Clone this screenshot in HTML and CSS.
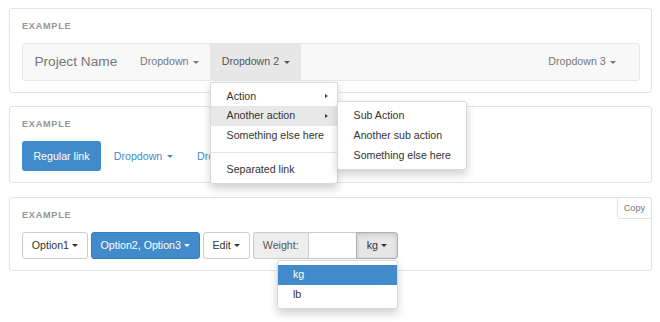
FILE: index.html
```html
<!DOCTYPE html>
<html>
<head>
<meta charset="utf-8">
<link rel="stylesheet" href="styles.css">
</head>
<body>
<div class="page">
  <section class="example ex-nav">
    <div class="ex-label">Example</div>
    <nav class="navbar">
      <a class="brand">Project Name</a>
      <ul class="nav">
        <li class="nav-item"><a>Dropdown <span class="caret"></span></a></li>
        <li class="nav-item open"><a>Dropdown 2 <span class="caret"></span></a>
          <ul class="menu menu-main">
            <li class="sub"><a>Action <span class="arrow"></span></a></li>
            <li class="sub"><a class="hl">Another action <span class="arrow"></span></a>
              <ul class="menu menu-sub">
                <li><a>Sub Action</a></li>
                <li><a>Another sub action</a></li>
                <li><a>Something else here</a></li>
              </ul>
            </li>
            <li><a>Something else here</a></li>
            <li class="divider"></li>
            <li><a>Separated link</a></li>
          </ul>
        </li>
      </ul>
      <ul class="nav nav-right">
        <li class="nav-item"><a>Dropdown 3 <span class="caret"></span></a></li>
      </ul>
    </nav>
  </section>

  <section class="example ex-pills">
    <div class="ex-label">Example</div>
    <ul class="pills">
      <li><a class="pill active">Regular link</a></li>
      <li><a class="pill">Dropdown <span class="caret"></span></a></li>
      <li><a class="pill">Dropdown <span class="caret"></span></a></li>
    </ul>
  </section>

  <section class="example ex-btns">
    <button class="copy">Copy</button>
    <div class="ex-label">Example</div>
    <div class="toolbar">
      <button class="btn">Option1 <span class="caret"></span></button>
      <button class="btn btn-primary">Option2, Option3 <span class="caret"></span></button>
      <button class="btn">Edit <span class="caret"></span></button>
      <div class="input-group">
        <span class="addon">Weight:</span>
        <span class="field"></span>
        <button class="btn btn-unit">kg <span class="caret"></span></button>
        <ul class="menu menu-unit">
          <li><a class="active">kg</a></li>
          <li><a>lb</a></li>
        </ul>
      </div>
    </div>
  </section>
</div>
</body>
</html>
```

FILE: styles.css
```css
* { box-sizing: border-box; }
html, body { margin: 0; padding: 0; background: #fff; }
body {
  font-family: "Liberation Sans", Arial, sans-serif;
  font-size: 10.64px;
  line-height: 15.2px;
  color: #333;
}
ul { list-style: none; margin: 0; padding: 0; }
a { text-decoration: none; cursor: pointer; }

.page {
  min-height: 322px;
  padding: 8px 8px 0 9px;
}

.example {
  position: relative;
  border: 1px solid #e3e3e3;
  border-radius: 3px;
  padding: 0 11px 11px 12px;
}
.ex-nav { margin-bottom: 13px; padding-bottom: 11px; }
.ex-pills { margin-bottom: 14px; }

.ex-label {
  padding-top: 11px;
  height: 23px;
  margin-bottom: 11px;
  font-size: 9.1px;
  line-height: 12px;
  font-weight: bold;
  letter-spacing: 0.76px;
  text-transform: uppercase;
  color: #959595;
}

.caret {
  display: inline-block;
  width: 0;
  height: 0;
  vertical-align: middle;
  border-top: 3px solid;
  border-left: 3px solid transparent;
  border-right: 3px solid transparent;
  margin-left: 1.5px;
  margin-top: -1px;
}

/* navbar */
.navbar {
  display: flex;
  height: 38px;
  background: #f8f8f8;
  border: 1px solid #e7e7e7;
  border-radius: 3px;
}
.brand {
  display: block;
  padding: 0 11.4px;
  font-size: 13.7px;
  line-height: 36px;
  color: #777;
}
.nav { display: flex; }
.nav-right { margin-left: auto; padding-right: 11.5px; }
.nav-item { position: relative; }
.nav-item > a {
  display: block;
  padding: 10.4px 11.4px;
  line-height: 15.2px;
  color: #777;
}
.nav-item.open > a {
  background: #e7e7e7;
  color: #555;
}

/* dropdown menus */
.menu {
  position: absolute;
  z-index: 10;
  background: #fff;
  border: 1px solid #d9d9d9;
  border-radius: 3px;
  box-shadow: 0 4.5px 9px rgba(0, 0, 0, 0.175);
  padding: 3.8px 0;
  white-space: nowrap;
}
.menu li { position: relative; }
.menu li > a {
  display: flex;
  align-items: center;
  justify-content: space-between;
  padding: 2.3px 15.2px;
  line-height: 15.2px;
  color: #333;
}
.menu li > a.hl { background: #e8e8e8; }
.menu li > a.active { background: #428bca; color: #fff; }
.menu .divider {
  height: 1px;
  margin: 6.4px 0;
  background: #e5e5e5;
}
.menu-main {
  top: 100%;
  left: 0;
  margin-top: 1.5px;
  width: 128px;
  border-top-left-radius: 0;
  border-top-right-radius: 0;
}
.menu-main .sub > a { padding-right: 9px; }
.arrow {
  display: inline-block;
  width: 0;
  height: 0;
  border-left: 3px solid #444;
  border-top: 2.5px solid transparent;
  border-bottom: 2.5px solid transparent;
}
.menu-sub {
  top: -5px;
  left: 100%;
  width: 130px;
}

/* pills */
.pills { display: flex; gap: 1.5px; }
.pill {
  display: block;
  padding: 7.6px 11.4px;
  line-height: 15.2px;
  border-radius: 3px;
  color: #428bca;
}
.pill.active { background: #428bca; color: #fff; }

/* buttons */
.copy {
  position: absolute;
  top: -1px;
  right: -1px;
  margin: 0;
  padding: 3.8px 6px;
  font-family: inherit;
  font-size: 9.1px;
  line-height: 12px;
  color: #777;
  background: #fff;
  border: 1px solid #e1e1e8;
  border-radius: 0 3px 0 3px;
}
.toolbar {
  display: flex;
  align-items: stretch;
  gap: 3px;
}
.btn {
  margin: 0;
  padding: 4.6px 8.8px;
  font-family: inherit;
  font-size: 10.64px;
  line-height: 15.2px;
  color: #333;
  background: #fff;
  border: 1px solid #ccc;
  border-radius: 3px;
  white-space: nowrap;
}
.btn .caret { margin-left: 0; }
.btn-primary {
  background: #428bca;
  border-color: #357ebd;
  color: #fff;
}
.input-group {
  position: relative;
  display: flex;
  align-items: stretch;
}
.addon {
  padding: 4.6px 9.3px;
  line-height: 15.2px;
  color: #555;
  background: #eee;
  border: 1px solid #ccc;
  border-right: 0;
  border-radius: 3px 0 0 3px;
}
.field {
  width: 49px;
  background: #fff;
  border: 1px solid #ccc;
}
.btn-unit {
  margin-left: -1px;
  padding-left: 9.8px;
  padding-right: 9.8px;
  border-radius: 0 3px 3px 0;
  background: #e6e6e6;
  border-color: #adadad;
  box-shadow: inset 0 2px 4px rgba(0, 0, 0, 0.125);
}
.menu-unit {
  top: 100%;
  right: 0;
  margin-top: 1.5px;
  width: 121px;
}
```
